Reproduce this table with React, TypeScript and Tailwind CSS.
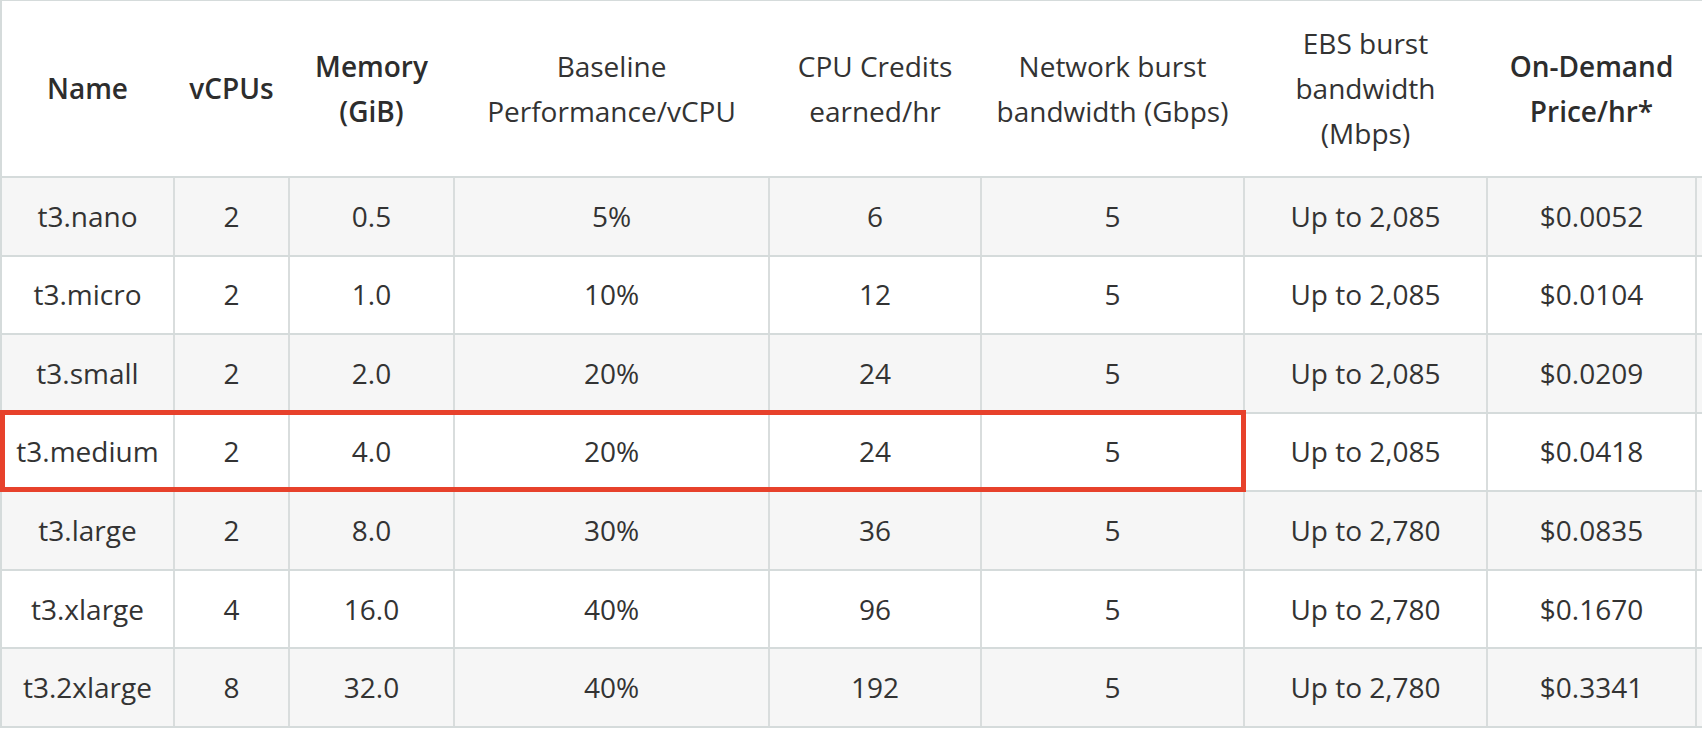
import type { ReactNode } from 'react';

interface Column {
  width: string;
  header: ReactNode;
  bold?: boolean;
}

const columns: Column[] = [
  { width: 'w-[173px]', header: 'Name', bold: true },
  { width: 'w-[115px]', header: 'vCPUs', bold: true },
  { width: 'w-[165px]', header: <>Memory<br />(GiB)</>, bold: true },
  { width: 'w-[315px]', header: <>Baseline<br />Performance/vCPU</> },
  { width: 'w-[212px]', header: <>CPU Credits<br />earned/hr</> },
  { width: 'w-[263px]', header: <>Network burst<br />bandwidth (Gbps)</> },
  { width: 'w-[243px]', header: <>EBS burst<br />bandwidth<br />(Mbps)</> },
  { width: 'w-[209px]', header: <>On-Demand<br />Price/hr*</>, bold: true },
  { width: 'w-[240px]', header: '' },
];

const rows: string[][] = [
  ['t3.nano', '2', '0.5', '5%', '6', '5', 'Up to 2,085', '$0.0052', ''],
  ['t3.micro', '2', '1.0', '10%', '12', '5', 'Up to 2,085', '$0.0104', ''],
  ['t3.small', '2', '2.0', '20%', '24', '5', 'Up to 2,085', '$0.0209', ''],
  ['t3.medium', '2', '4.0', '20%', '24', '5', 'Up to 2,085', '$0.0418', ''],
  ['t3.large', '2', '8.0', '30%', '36', '5', 'Up to 2,780', '$0.0835', ''],
  ['t3.xlarge', '4', '16.0', '40%', '96', '5', 'Up to 2,780', '$0.1670', ''],
  ['t3.2xlarge', '8', '32.0', '40%', '192', '5', 'Up to 2,780', '$0.3341', ''],
];

export default function App() {
  return (
    <div className="w-[1702px] h-[732px] overflow-hidden bg-white font-['Open_Sans',sans-serif] text-[28px] leading-[45px] text-[#333]">
      <div className="relative w-[1950px] border-l-2 border-[#d5dbdb]">
        {/* Cabecera */}
        <div className="flex h-[178px] border-t border-b-2 border-[#d5dbdb] bg-white">
          {columns.map((c, i) => (
            <div
              key={i}
              className={`${c.width} shrink-0 border-r-2 border-transparent flex items-center justify-center text-center whitespace-nowrap ${c.bold ? 'font-semibold text-[#2d2d2d]' : 'font-normal'}`}
            >
              <div>{c.header}</div>
            </div>
          ))}
        </div>

        {/* Filas */}
        {rows.map((r, ri) => (
          <div
            key={ri}
            className={`flex h-[78.57px] border-b-2 border-[#d5dbdb] ${ri % 2 === 0 ? 'bg-[#f6f6f6]' : 'bg-white'}`}
          >
            {r.map((v, ci) => (
              <div
                key={ci}
                className={`${columns[ci].width} shrink-0 border-r-2 border-[#d9dddd] flex items-center justify-center whitespace-nowrap`}
              >
                {v}
              </div>
            ))}
          </div>
        ))}

        {/* Resaltado t3.medium */}
        <div className="absolute left-[-2px] top-[410px] w-[1246px] h-[82px] border-[5px] border-[#e7412b] pointer-events-none" />
      </div>
    </div>
  );
}
